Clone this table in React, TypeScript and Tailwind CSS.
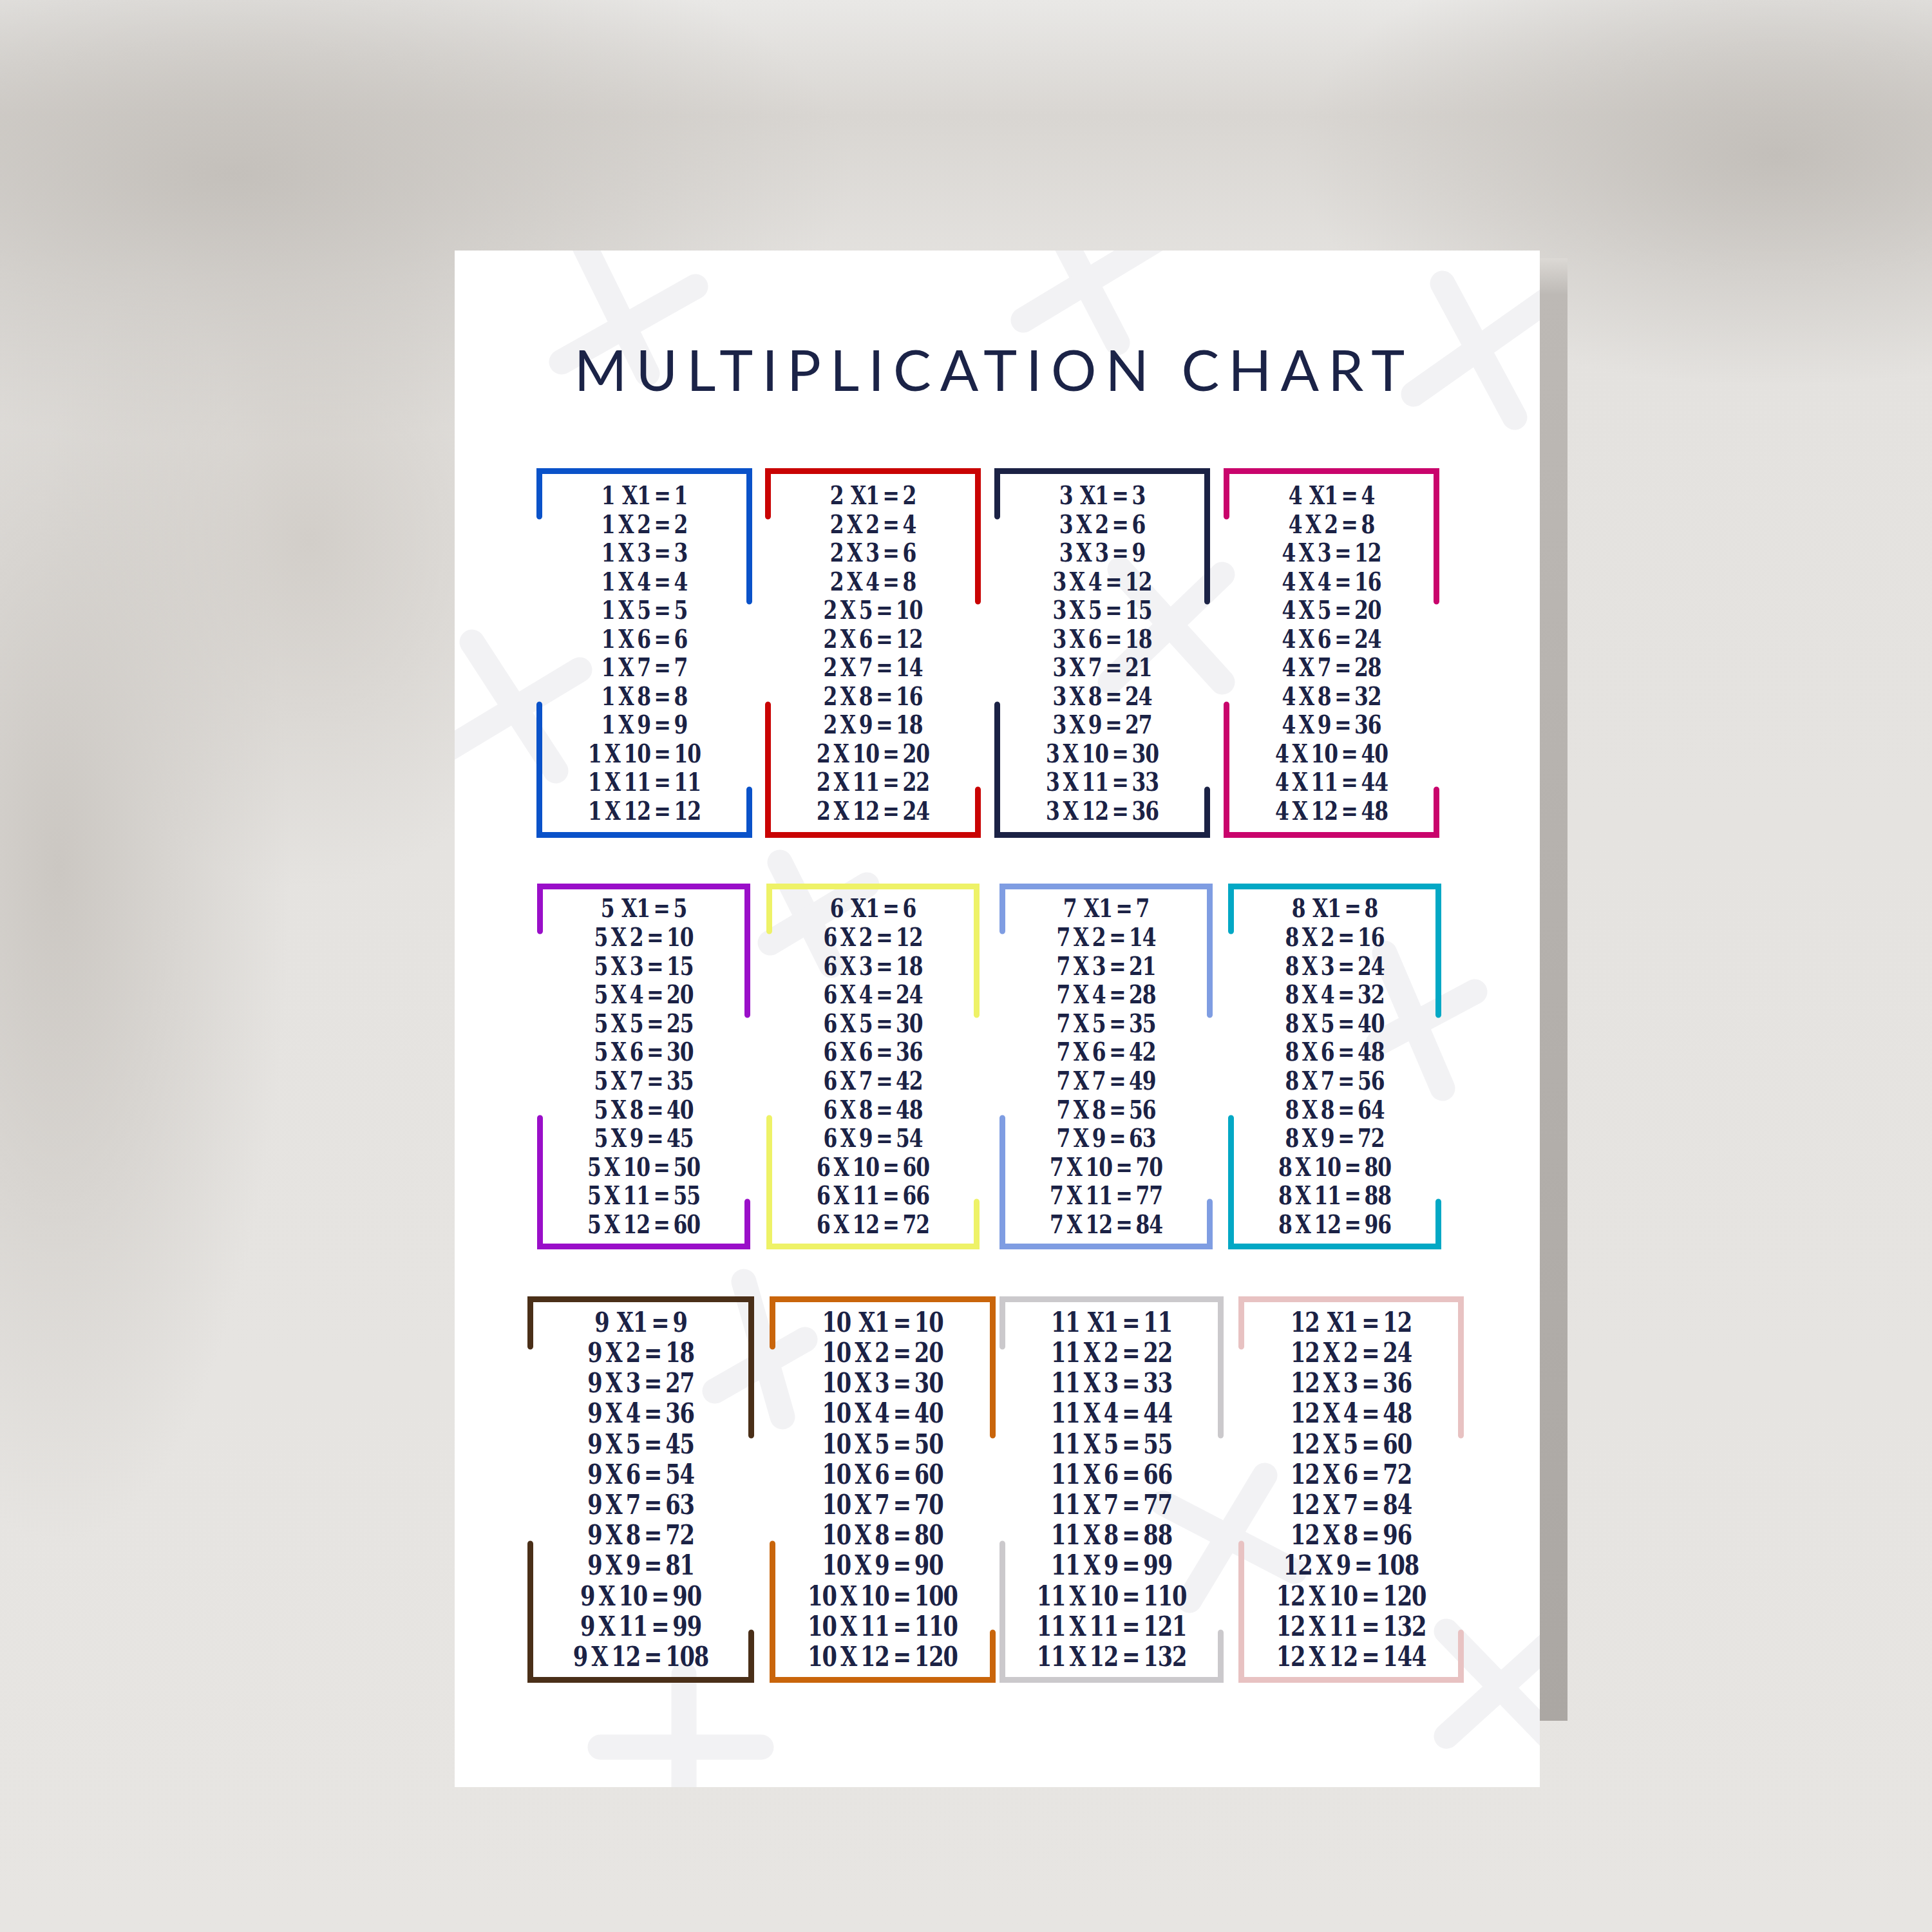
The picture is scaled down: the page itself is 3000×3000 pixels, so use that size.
import React from "react";

type Box = { n: number; color: string; cls: string; w: number };
type Row = { cls: string; h: number; text: string; boxes: Box[] };

const rows: Row[] = [
  {
    cls: "mt-[110px] h-[574px]",
    h: 574,
    text: "text-[40px] leading-[44.5px]",
    boxes: [
      { n: 1, color: "#0a52c9", cls: "ml-[127px] w-[335px]", w: 335 },
      { n: 2, color: "#c90303", cls: "ml-[20px] w-[335px]", w: 335 },
      { n: 3, color: "#1b2245", cls: "ml-[21px] w-[335px]", w: 335 },
      { n: 4, color: "#c9046c", cls: "ml-[21px] w-[335px]", w: 335 },
    ],
  },
  {
    cls: "mt-[71px] h-[568px]",
    h: 568,
    text: "text-[40px] leading-[44.6px]",
    boxes: [
      { n: 5, color: "#9a0fc9", cls: "ml-[128px] w-[331px]", w: 331 },
      { n: 6, color: "#eef267", cls: "ml-[25px] w-[331px]", w: 331 },
      { n: 7, color: "#7f9de2", cls: "ml-[31px] w-[331px]", w: 331 },
      { n: 8, color: "#03a8c5", cls: "ml-[24px] w-[331px]", w: 331 },
    ],
  },
  {
    cls: "mt-[73px] h-[600px]",
    h: 600,
    text: "text-[43px] leading-[47.2px]",
    boxes: [
      { n: 9, color: "#4a2f18", cls: "ml-[113px] w-[352px]", w: 352 },
      { n: 10, color: "#c9650b", cls: "ml-[24px] w-[351px]", w: 351 },
      { n: 11, color: "#cbc9cc", cls: "ml-[6px] w-[348px]", w: 348 },
      { n: 12, color: "#e8c2c2", cls: "ml-[23px] w-[350px]", w: 350 },
    ],
  },
];

function Frame({ w, h, color }: { w: number; h: number; color: string }) {
  const s = 9;
  const o = s / 2;
  const lt = Math.round(h * 0.13);
  const rt = Math.round(h * 0.36);
  const lb = h - Math.round(h * 0.36);
  const rb = h - Math.round(h * 0.13);
  return (
    <svg
      className="absolute left-0 top-0"
      width={w}
      height={h}
      viewBox={`0 0 ${w} ${h}`}
      fill="none"
    >
      <path
        d={`M${o} ${lt} L${o} ${o} L${w - o} ${o} L${w - o} ${rt}`}
        stroke={color}
        strokeWidth={s}
        strokeLinecap="round"
        strokeLinejoin="miter"
      />
      <path
        d={`M${o} ${lb} L${o} ${h - o} L${w - o} ${h - o} L${w - o} ${rb}`}
        stroke={color}
        strokeWidth={s}
        strokeLinecap="round"
        strokeLinejoin="miter"
      />
    </svg>
  );
}

function Table({ box, h, text }: { box: Box; h: number; text: string }) {
  const lines = Array.from({ length: 12 }, (_, i) => i + 1);
  return (
    <div className={`relative shrink-0 h-full ${box.cls}`}>
      <Frame w={box.w} h={h} color={box.color} />
      <div
        className={`relative flex h-full scale-x-[0.87] flex-col items-center justify-center font-['DejaVu_Serif_Condensed','DejaVu_Serif',serif] font-bold font-stretch-condensed tracking-[-0.03em] [word-spacing:-0.12em] text-[#1b2245] ${text}`}
      >
        {lines.map((i) => (
          <div key={i} className="whitespace-pre">
            {i === 1 ? `${box.n}  X${i} = ${box.n * i}` : `${box.n} X ${i} = ${box.n * i}`}
          </div>
        ))}
      </div>
    </div>
  );
}

const marks: [number, number, number, number][] = [
  [200, -10, 299, 191],
  [374, 56, 166, 173],
  [944, -20, 1029, 143],
  [1095, -20, 883, 108],
  [1534, 51, 1646, 259],
  [1720, 60, 1489, 223],
  [27, 608, 157, 808],
  [194, 651, -20, 780],
  [1033, 495, 1192, 670],
  [1192, 503, 1018, 670],
  [505, 950, 585, 1110],
  [640, 985, 490, 1075],
  [1444, 1091, 1534, 1301],
  [1584, 1151, 1434, 1231],
  [449, 1601, 509, 1811],
  [544, 1691, 404, 1771],
  [1100, 1945, 1304, 2051],
  [1258, 1902, 1141, 2096],
  [1540, 2144, 1720, 2330],
  [1720, 2144, 1540, 2307],
  [356, 2211, 356, 2420],
  [226, 2324, 476, 2324],
];

function Marks() {
  return (
    <svg
      className="absolute left-0 top-0"
      width={1685}
      height={2386}
      viewBox="0 0 1685 2386"
      fill="none"
    >
      {marks.map(([x1, y1, x2, y2], i) => (
        <line
          key={i}
          x1={x1}
          y1={y1}
          x2={x2}
          y2={y2}
          stroke="#f2f2f4"
          strokeWidth={39}
          strokeLinecap="round"
        />
      ))}
    </svg>
  );
}

export default function App() {
  return (
    <div className="w-[3000px] h-[3000px] overflow-hidden bg-[#e7e5e2] bg-[image:radial-gradient(ellipse_32%_14%_at_12%_9%,#c4c0bb,transparent),radial-gradient(ellipse_25%_12%_at_92%_8%,#c3bfba,transparent),radial-gradient(ellipse_12%_35%_at_3%_45%,#cbc7c2,transparent),radial-gradient(ellipse_14%_18%_at_16%_28%,#d2cec9,transparent),linear-gradient(180deg,#e9e8e6_0%,#d9d6d2_6%,#e4e2df_14%,#e7e5e2_100%)] pt-[389px] pl-[706px]">
      <div className="flex">
        <div className="relative w-[1685px] h-[2386px] shrink-0 overflow-hidden bg-white">
          <Marks />
          <div className="relative flex flex-col">
            <div className="pt-[140px] h-[228px] text-center font-['Lato',sans-serif] text-[88px] leading-none tracking-[0.16em] text-[#1b2347] pr-[10px]">
              MULTIPLICATION CHART
            </div>
            {rows.map((r, ri) => (
              <div key={ri} className={`flex ${r.cls}`}>
                {r.boxes.map((b) => (
                  <Table key={b.n} box={b} h={r.h} text={r.text} />
                ))}
              </div>
            ))}
          </div>
        </div>
        <div className="mt-[12px] h-[2271px] w-[43px] shrink-0 bg-[linear-gradient(180deg,#dcd9d5_0%,#bdb9b5_2.5%,#b4b0ac_50%,#aba7a3_100%)]" />
      </div>
    </div>
  );
}
